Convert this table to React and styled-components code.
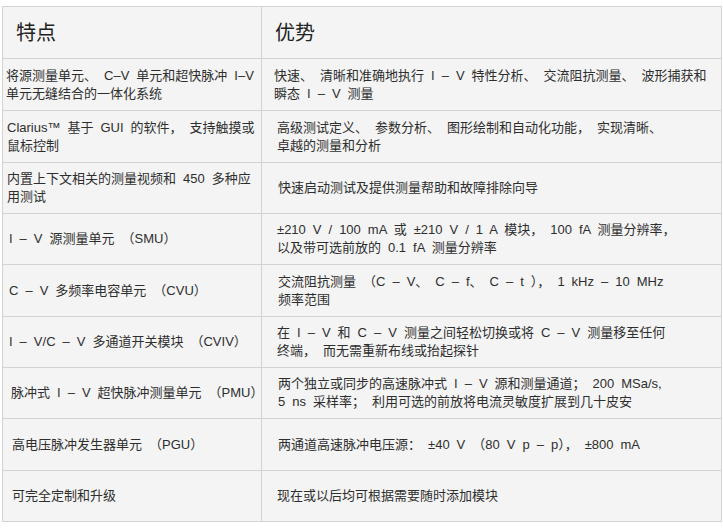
import React from "react";
import styled, { createGlobalStyle } from "styled-components";

const Global = createGlobalStyle`
  html, body { margin: 0; padding: 0; background: #ffffff; }
  body { font-family: "Liberation Sans", "Noto Sans CJK SC", sans-serif; }
`;

const Page = styled.div`
  padding: 6px 1px 0 2px;
`;

const Table = styled.div`
  width: 720px;
  box-sizing: border-box;
  border: 1px solid #d3d3d3;
  background: #f4f4f4;
  display: grid;
  grid-template-columns: 259px 1fr;
`;

const Cell = styled.div`
  box-sizing: border-box;
  height: ${(p) => p.$h}px;
  display: flex;
  flex-direction: column;
  justify-content: center;
  padding-left: ${(p) => p.$pad}px;
  border-bottom: ${(p) => (p.$last ? "none" : "1px solid #d3d3d3")};
  border-right: ${(p) => (p.$left ? "1px solid #d3d3d3" : "none")};
  color: #2e2e2e;
  font-size: 13px;
  line-height: 18px;
  word-spacing: 3.4px;
  white-space: nowrap;
`;

const HeadCell = styled(Cell)`
  font-size: 20px;
  line-height: 24px;
  color: #222222;
  word-spacing: 0;
`;

const Line = styled.span`
  display: block;
`;

const rows = [
  {
    h: 52,
    lp: 3,
    rp: 12,
    l: ["将源测量单元、 C–V 单元和超快脉冲 I–V", "单元无缝结合的一体化系统"],
    r: ["快速、 清晰和准确地执行 I – V 特性分析、 交流阻抗测量、 波形捕获和", "瞬态 I – V 测量"],
  },
  {
    h: 52,
    lp: 4,
    rp: 15,
    l: ["Clarius™ 基于 GUI 的软件， 支持触摸或", "鼠标控制"],
    r: ["高级测试定义、 参数分析、 图形绘制和自动化功能， 实现清晰、", "卓越的测量和分析"],
  },
  {
    h: 51,
    lp: 4,
    rp: 16,
    l: ["内置上下文相关的测量视频和 450 多种应", "用测试"],
    r: ["快速启动测试及提供测量帮助和故障排除向导"],
  },
  {
    h: 51,
    lp: 6,
    rp: 15,
    l: ["I – V 源测量单元 （SMU）"],
    r: ["±210 V / 100 mA 或 ±210 V / 1 A 模块， 100 fA 测量分辨率，", "以及带可选前放的 0.1 fA 测量分辨率"],
  },
  {
    h: 52,
    lp: 6,
    rp: 16,
    l: ["C – V 多频率电容单元 （CVU）"],
    r: ["交流阻抗测量 （C – V、 C – f、 C – t ）， 1 kHz – 10 MHz", "频率范围"],
  },
  {
    h: 51,
    lp: 6,
    rp: 15,
    l: ["I – V/C – V 多通道开关模块 （CVIV）"],
    r: ["在 I – V 和 C – V 测量之间轻松切换或将 C – V 测量移至任何", "终端， 而无需重新布线或抬起探针"],
  },
  {
    h: 51,
    lp: 8,
    rp: 16,
    l: ["脉冲式 I – V 超快脉冲测量单元 （PMU）"],
    r: ["两个独立或同步的高速脉冲式 I – V 源和测量通道； 200 MSa/s,", "5 ns 采样率； 利用可选的前放将电流灵敏度扩展到几十皮安"],
  },
  {
    h: 52,
    lp: 9,
    rp: 16,
    l: ["高电压脉冲发生器单元 （PGU）"],
    r: ["两通道高速脉冲电压源： ±40 V （80 V p – p）， ±800 mA"],
  },
  {
    h: 50,
    lp: 9,
    rp: 15,
    l: ["可完全定制和升级"],
    r: ["现在或以后均可根据需要随时添加模块"],
  },
];

export default function App() {
  return (
    <>
      <Global />
      <Page>
        <Table>
          <HeadCell $h={52} $pad={13} $left>
            特点
          </HeadCell>
          <HeadCell $h={52} $pad={13}>
            优势
          </HeadCell>
          {rows.map((row, i) => {
            const last = i === rows.length - 1;
            return (
              <React.Fragment key={i}>
                <Cell $h={row.h} $pad={row.lp} $left $last={last}>
                  {row.l.map((t, j) => (
                    <Line key={j}>{t}</Line>
                  ))}
                </Cell>
                <Cell $h={row.h} $pad={row.rp} $last={last}>
                  {row.r.map((t, j) => (
                    <Line key={j}>{t}</Line>
                  ))}
                </Cell>
              </React.Fragment>
            );
          })}
        </Table>
      </Page>
    </>
  );
}
